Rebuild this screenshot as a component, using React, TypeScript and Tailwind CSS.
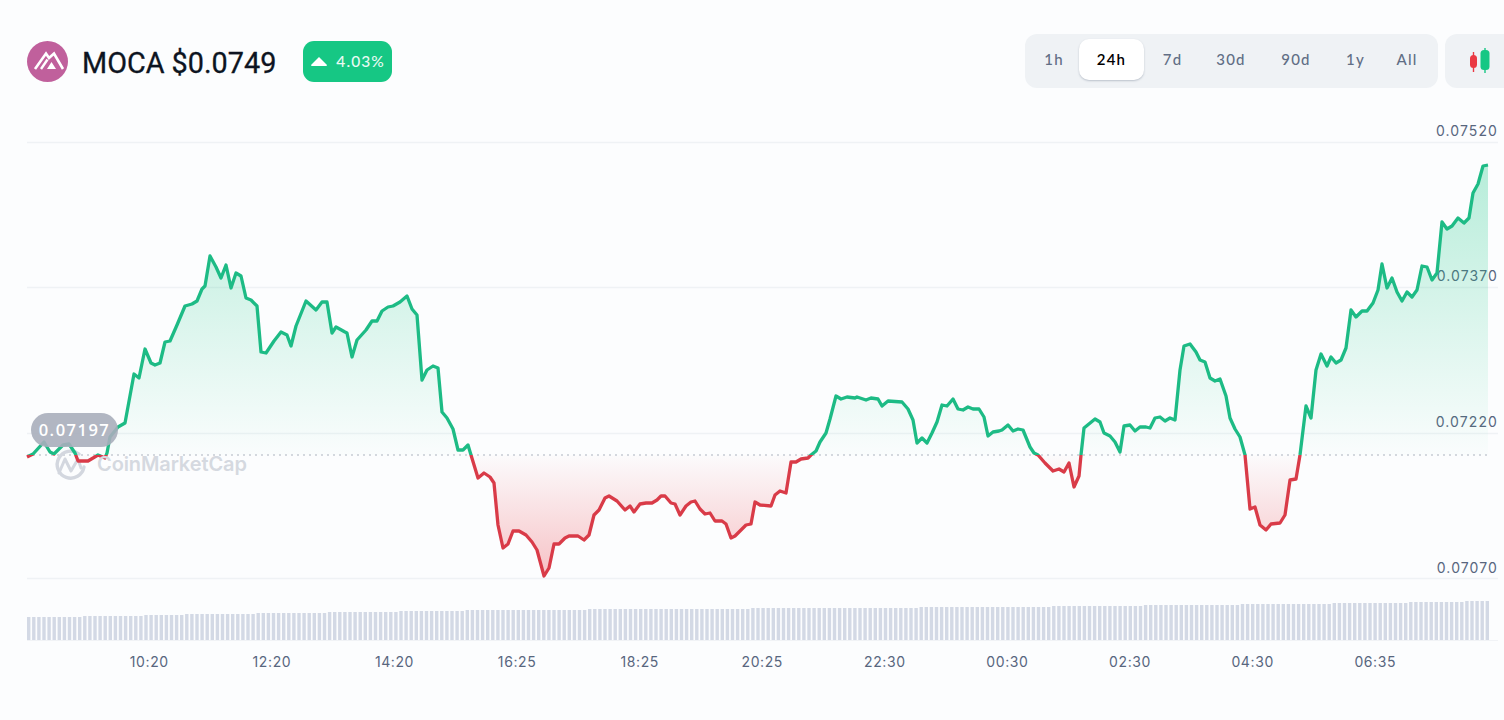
const RAW = "27,457 33,454 44,442 50,452 54,454 63,445 69,444 75,453 78,461 88,461 98,455 105,458 107,453 110,437 118,427 125,423 134,374 139,378 145,349 151,363 155,365 160,363 165,342 170,341 177,325 185,306 192,304 197,301 202,289 205,286 210,256 216,267 221,278 226,265 231,288 236,273 241,276 246,298 251,300 257,306 261,352 266,353 274,341 281,332 287,335 291,346 296,326 306,301 316,310 322,302 327,302 332,333 336,327 345,332 347,333 352,357 357,340 366,330 372,321 377,321 382,311 388,307 393,306 400,302 407,296 412,309 417,315 422,380 427,370 433,366 438,368 442,412 447,418 453,429 458,450 463,450 468,445 471,455 478,478 484,473 490,477 494,483 498,525 503,548 508,544 513,531 519,531 526,535 532,542 537,550 544,576 549,568 554,544 559,544 565,538 569,536 578,536 584,540 589,535 594,515 599,510 605,498 609,496 617,501 625,510 630,506 634,512 640,504 646,503 652,503 657,500 661,496 665,496 671,503 675,504 680,515 686,506 691,502 695,501 700,509 705,514 710,513 715,521 722,521 726,524 731,538 735,536 741,530 746,525 751,524 755,502 760,505 771,506 775,495 780,491 786,493 791,462 796,462 801,459 808,458 811,455 816,451 820,442 826,433 830,419 836,396 841,399 847,397 855,398 857,397 863,399 866,400 871,398 878,399 882,406 888,401 902,402 908,409 913,420 917,443 922,438 927,443 932,433 937,422 942,405 947,406 953,399 958,409 963,410 968,407 973,409 979,409 984,417 988,436 993,432 999,431 1002,430 1008,425 1013,431 1018,429 1023,430 1030,447 1034,453 1038,455 1045,463 1053,471 1059,469 1064,472 1069,463 1074,487 1079,476 1081,455 1084,428 1095,419 1100,422 1104,433 1110,436 1115,442 1120,452 1124,426 1130,425 1135,431 1140,427 1146,427 1150,428 1155,418 1160,417 1165,421 1170,418 1175,420 1180,370 1184,346 1190,344 1196,352 1200,360 1205,362 1210,378 1215,381 1220,379 1226,396 1230,418 1235,429 1240,437 1245,455 1250,509 1255,507 1260,525 1266,530 1271,524 1280,523 1285,515 1290,480 1296,479 1300,455 1306,406 1311,418 1316,370 1321,354 1327,366 1331,357 1336,363 1341,360 1346,348 1351,310 1356,317 1362,311 1367,311 1373,303 1378,290 1382,264 1387,288 1392,278 1397,292 1402,301 1407,292 1412,297 1417,290 1422,266 1427,267 1432,280 1437,273 1442,222 1447,229 1452,226 1458,218 1464,223 1469,218 1473,193 1478,184 1483,166 1488,165";
const TOP = 100;
const BASE = 455;
const points = RAW.split(" ").map((p) => {
  const [x, y] = p.split(",").map(Number);
  return [x, y - TOP];
});
const line = points.map((p) => p.join(",")).join(" ");
const area = `27,${BASE - TOP} ${line} 1488,${BASE - TOP}`;

const bars = Array.from({ length: 287 }, (_, i) => {
  const x = 27 + i * 5.1;
  const stops = [[27, 617], [130, 616], [150, 615], [500, 610], [1000, 607], [1380, 603], [1490, 601]];
  let top = 601;
  for (let k = 0; k < stops.length - 1; k++) {
    if (x >= stops[k][0] && x <= stops[k + 1][0]) {
      top = stops[k][1] + ((x - stops[k][0]) / (stops[k + 1][0] - stops[k][0])) * (stops[k + 1][1] - stops[k][1]);
      break;
    }
  }
  return { x, top: Math.round(top) };
});

const tabs = [
  ["1h", "w-[50px]"],
  ["24h", "w-[65px]"],
  ["7d", "w-[57px]"],
  ["30d", "w-[60px]"],
  ["90d", "w-[70px]"],
  ["1y", "w-[49px]"],
  ["All", "w-[54px]"],
];
const yLabels = [
  ["0.07520", "top-[22px]"],
  ["0.07370", "top-[167px]"],
  ["0.07220", "top-[313px]"],
  ["0.07070", "top-[459px]"],
];
const times = ["10:20", "12:20", "14:20", "16:25", "18:25", "20:25", "22:30", "00:30", "02:30", "04:30", "06:35"];

export default function App() {
  return (
    <div className="w-[1504px] h-[720px] overflow-hidden bg-[#fcfdfe] font-['Inter',sans-serif] flex flex-col">
      <header className="h-[100px] pt-[34px] pl-[27px] flex items-start">
        <div className="h-[54px] flex items-center flex-1">
          <svg width="41" height="41" viewBox="0 0 41 41" className="shrink-0 mt-[1px]">
            <circle cx="20.5" cy="20.5" r="20.5" fill="#c0609c" />
            <path d="M8 28 L19 12.5 L22 17 L27 12.5 L36 28" fill="none" stroke="#fff" strokeWidth="2.6" strokeLinejoin="miter" />
            <path d="M14 28 L20.5 18.5" fill="none" stroke="#fff" strokeWidth="2.4" />
            <path d="M20 28 L24.5 21 L29 28 Z" fill="#fff" />
          </svg>
          <h1 className="ml-[14px] mt-[5px] text-[28.8px] leading-none font-normal text-[#0d1421] font-['Roboto',sans-serif] whitespace-nowrap [-webkit-text-stroke:0.3px_#0d1421]">MOCA $0.0749</h1>
          <div className="ml-[27px] w-[89px] h-[41px] mt-[1px] rounded-[11px] bg-[#16c784] flex items-center pl-[8px] gap-[9px] text-white">
            <svg width="16" height="9" viewBox="0 0 16 9" className="shrink-0"><path d="M8 0 L16 8 Q16 9 15 9 L1 9 Q0 9 0 8 Z" fill="#fff" /></svg>
            <span className="text-[15.5px] font-medium font-['Lato',sans-serif] tracking-[1.1px] text-[#e8faf3]">4.03%</span>
          </div>
        </div>
        <div className="h-[54px] w-[413px] rounded-[12px] bg-[#eff2f5] flex items-start pt-[5px] pl-[4px]">
          {tabs.map(([t, w]) => {
            const active = t === "24h";
            return (
              <div
                key={t}
                className={`${w} h-[41px] flex items-center justify-center text-[15px] font-['Lato',sans-serif] tracking-[1.2px] rounded-[10px] ${
                  active ? "bg-white text-[#000000] font-semibold shadow-[0_1px_2px_rgba(88,102,126,0.35)]" : "text-[#616e85] font-medium"
                }`}
              >
                {t}
              </div>
            );
          })}
        </div>
        <div className="ml-[7px] h-[54px] w-[59px] shrink-0 rounded-l-[12px] bg-[#eff2f5] flex items-start pt-[14px] pl-[24px]">
          <svg width="22" height="28" viewBox="0 0 22 28">
            <path d="M4.5 4 V24" stroke="#ea3943" strokeWidth="1.4" />
            <rect x="1" y="7" width="7" height="13" rx="3.5" fill="#ea3943" />
            <path d="M16 0 V25" stroke="#16c784" strokeWidth="1.4" />
            <rect x="11.5" y="2" width="9" height="20" rx="3.5" fill="#16c784" />
          </svg>
        </div>
      </header>

      <div className="relative h-[545px]">
        {yLabels.map(([t, pos]) => (
          <span key={t} className={`absolute right-[6px] ${pos} text-[14px] leading-[18px] text-[#58667e] tracking-[1.1px]`}>{t}</span>
        ))}
        <svg width="1504" height="545" viewBox="0 0 1504 545" className="absolute inset-0">
          <defs>
            <linearGradient id="gUp" gradientUnits="userSpaceOnUse" x1="0" y1="65" x2="0" y2="355">
              <stop offset="0" stopColor="#16c784" stopOpacity="0.3" />
              <stop offset="1" stopColor="#16c784" stopOpacity="0.01" />
            </linearGradient>
            <linearGradient id="gDown" gradientUnits="userSpaceOnUse" x1="0" y1="355" x2="0" y2="476">
              <stop offset="0" stopColor="#ea3943" stopOpacity="0.01" />
              <stop offset="1" stopColor="#ea3943" stopOpacity="0.3" />
            </linearGradient>
            <clipPath id="above"><rect x="0" y="0" width="1504" height="355" /></clipPath>
            <clipPath id="below"><rect x="0" y="355" width="1504" height="190" /></clipPath>
          </defs>
          {[42, 187, 333, 478].map((y) => (
            <line key={y} x1="27" x2="1498" y1={y + 0.5} y2={y + 0.5} stroke="#eff2f5" strokeWidth="1.5" />
          ))}
          <line x1="27" x2="1498" y1="540.5" y2="540.5" stroke="#f1f3f6" strokeWidth="1" />
          <polygon points={area} fill="url(#gUp)" clipPath="url(#above)" />
          <polygon points={area} fill="url(#gDown)" clipPath="url(#below)" />
          <line x1="27" x2="1490" y1="355" y2="355" stroke="#c6cbd4" strokeWidth="1.3" strokeDasharray="2 4" />
          {bars.map((b) => (
            <rect key={b.x} x={b.x} y={b.top - TOP} width="3.4" height={640 - b.top} fill="#d3d9e5" />
          ))}
          <g fill="none" stroke="#d3d7df" strokeWidth="3.4" strokeLinecap="round" strokeLinejoin="round">
            <path d="M84 367 A13.5 13.5 0 1 1 79 354" />
            <path d="M59 373 L65 359 L71 371 L78 359 L81 368" strokeWidth="3" />
          </g>
          <polyline points={line} fill="none" stroke="#1dbb85" strokeWidth="3.3" strokeLinejoin="round" clipPath="url(#above)" />
          <polyline points={line} fill="none" stroke="#d93b48" strokeWidth="3.3" strokeLinejoin="round" clipPath="url(#below)" />
        </svg>
        <span className="absolute left-[97px] top-[352px] text-[20px] leading-[24px] font-semibold text-[#d5d9e0] font-['Inter',sans-serif] tracking-[-0.1px]">CoinMarketCap</span>
        <div className="absolute left-[31px] top-[313px] w-[87px] h-[34px] rounded-full bg-[#a9aebb]/90 text-white text-[16.5px] font-semibold tracking-[1.5px] flex items-center justify-center font-['Open_Sans',sans-serif]">0.07197</div>
      </div>

      <div className="pl-[88px] grid grid-cols-[repeat(11,122.6px)] mt-[8px]">
        {times.map((t) => (
          <span key={t} className="text-center text-[14px] leading-[18px] text-[#58667e] tracking-[0.6px]">{t}</span>
        ))}
      </div>
    </div>
  );
}
